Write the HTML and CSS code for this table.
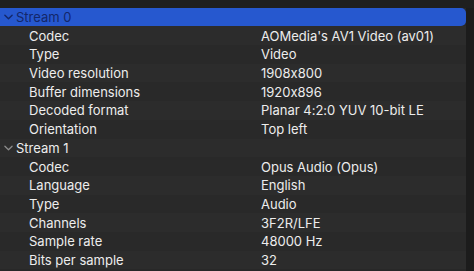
FILE: index.html
```html
<!DOCTYPE html>
<html lang="en">
<head>
<meta charset="utf-8">
<title>Stream info</title>
<link rel="stylesheet" href="styles.css">
</head>
<body>
<div class="pane">
  <div class="outline">
    <div class="row group selected">
      <span class="disclosure"><svg viewBox="0 0 10 6" width="9" height="6"><path d="M1 1l4 4 4-4" fill="none" stroke="currentColor" stroke-width="1.6" stroke-linecap="round" stroke-linejoin="round"/></svg></span>
      <span class="key">Stream 0</span>
    </div>
    <div class="row alt"><span class="key">Codec</span><span class="val">AOMedia's AV1 Video (av01)</span></div>
    <div class="row"><span class="key">Type</span><span class="val">Video</span></div>
    <div class="row alt"><span class="key">Video resolution</span><span class="val">1908x800</span></div>
    <div class="row"><span class="key">Buffer dimensions</span><span class="val">1920x896</span></div>
    <div class="row alt"><span class="key">Decoded format</span><span class="val">Planar 4:2:0 YUV 10-bit LE</span></div>
    <div class="row"><span class="key">Orientation</span><span class="val">Top left</span></div>
    <div class="row group alt">
      <span class="disclosure"><svg viewBox="0 0 10 6" width="9" height="6"><path d="M1 1l4 4 4-4" fill="none" stroke="currentColor" stroke-width="1.4" stroke-linecap="round" stroke-linejoin="round"/></svg></span>
      <span class="key">Stream 1</span>
    </div>
    <div class="row"><span class="key">Codec</span><span class="val">Opus Audio (Opus)</span></div>
    <div class="row alt"><span class="key">Language</span><span class="val">English</span></div>
    <div class="row"><span class="key">Type</span><span class="val">Audio</span></div>
    <div class="row alt"><span class="key">Channels</span><span class="val">3F2R/LFE</span></div>
    <div class="row"><span class="key">Sample rate</span><span class="val">48000 Hz</span></div>
    <div class="row alt"><span class="key">Bits per sample</span><span class="val">32</span></div>
  </div>
  <div class="edge"></div>
</div>
</body>
</html>
```
FILE: styles.css
```css
html, body {
  margin: 0;
  height: 100%;
  background: #1f1f1f;
  overflow: hidden;
}

body {
  font-family: "Inter", "Liberation Sans", sans-serif;
  font-size: 13px;
  font-feature-settings: "calt" 0;
  color: #ededed;
}

.pane {
  display: flex;
  height: 100%;
  padding-top: 7.7px;
  box-sizing: border-box;
}

.outline {
  flex: 0 0 466px;
  background: #282828;
}

.edge {
  flex: 1;
  background: #1c1c1c;
}

.row {
  display: flex;
  align-items: center;
  height: 18.7px;
  background: #292929;
}

.row.alt {
  background: #2c2c2c;
}

.key {
  flex: 0 0 232px;
  padding-left: 29px;
  white-space: nowrap;
}

.val {
  white-space: nowrap;
}

.group .key {
  padding-left: 0;
}

.disclosure {
  display: flex;
  align-items: center;
  justify-content: center;
  width: 16px;
  color: #8c8c8c;
}

.selected {
  background: #2658cf;
  border-radius: 0 5px 5px 0;
  color: #13276a;
}

.selected .disclosure {
  color: #13276a;
}
```
